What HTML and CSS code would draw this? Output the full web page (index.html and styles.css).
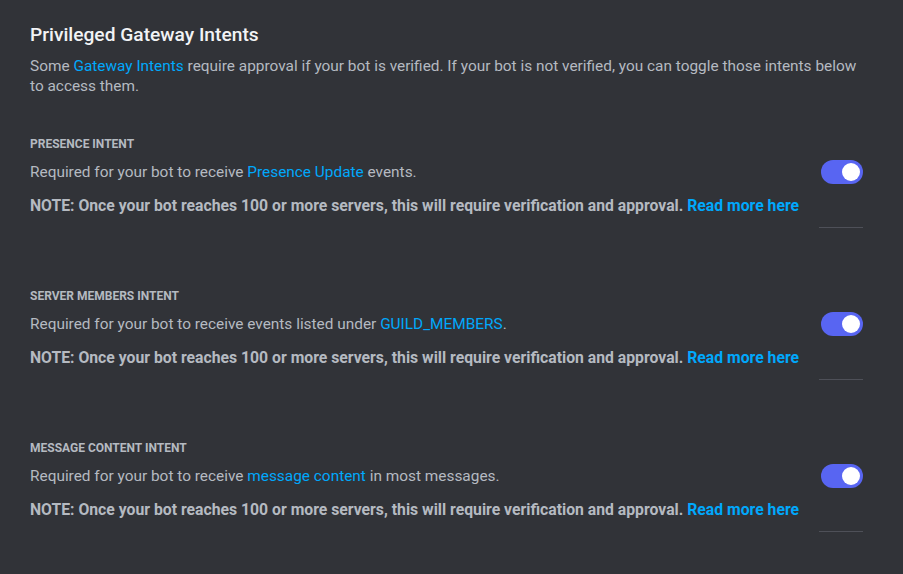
FILE: index.html
```html
<!DOCTYPE html>
<html>
<head>
<meta charset="utf-8">
<link rel="stylesheet" href="styles.css">
</head>
<body>
<div class="page">
  <h2 class="title">Privileged Gateway Intents</h2>
  <p class="desc">Some <a class="link">Gateway Intents</a> require approval if your bot is verified. If your bot is not verified, you can toggle those intents below to access them.</p>

  <section class="intent">
    <div class="text">
      <div class="label">PRESENCE INTENT</div>
      <p class="req">Required for your bot to receive <a class="link">Presence Update</a> events.</p>
      <p class="note">NOTE: Once your bot reaches 100 or more servers, this will require verification and approval. <a class="link">Read more here</a></p>
    </div>
    <div class="side">
      <div class="toggle"><span class="knob"></span></div>
      <div class="divider"></div>
    </div>
  </section>

  <section class="intent">
    <div class="text">
      <div class="label">SERVER MEMBERS INTENT</div>
      <p class="req">Required for your bot to receive events listed under <a class="link">GUILD_MEMBERS</a>.</p>
      <p class="note">NOTE: Once your bot reaches 100 or more servers, this will require verification and approval. <a class="link">Read more here</a></p>
    </div>
    <div class="side">
      <div class="toggle"><span class="knob"></span></div>
      <div class="divider"></div>
    </div>
  </section>

  <section class="intent">
    <div class="text">
      <div class="label">MESSAGE CONTENT INTENT</div>
      <p class="req">Required for your bot to receive <a class="link">message content</a> in most messages.</p>
      <p class="note">NOTE: Once your bot reaches 100 or more servers, this will require verification and approval. <a class="link">Read more here</a></p>
    </div>
    <div class="side">
      <div class="toggle"><span class="knob"></span></div>
      <div class="divider"></div>
    </div>
  </section>
</div>
</body>
</html>
```
FILE: styles.css
```css
html, body {
  margin: 0;
  padding: 0;
  background: #313338;
}
body {
  font-family: Roboto, "Noto Sans", sans-serif;
  color: #b5bac1;
  width: 903px;
  height: 574px;
  overflow: hidden;
}
.page {
  padding: 23px 40px 0 30px;
}
.title {
  margin: 0;
  font-size: 19.2px;
  line-height: 24px;
  font-weight: 500;
  color: #f2f3f5;
}
.desc {
  margin: 9px 0 0;
  font-size: 15.4px;
  line-height: 20px;
}
.link {
  color: #00a8fc;
  text-decoration: none;
}
.intent {
  display: flex;
  justify-content: space-between;
  margin-top: 40px;
}
.intent + .intent {
  margin-top: 60px;
}
.text {
  flex: 1;
}
.label {
  font-size: 12px;
  line-height: 16px;
  font-weight: 700;
  color: #b5bac1;
}
.req {
  margin: 10px 0 0;
  font-size: 15.4px;
  line-height: 20px;
}
.note {
  margin: 14px 0 0;
  font-size: 15.75px;
  line-height: 20px;
  font-weight: 700;
  white-space: nowrap;
}
.side {
  width: 44px;
  display: flex;
  flex-direction: column;
  align-items: flex-end;
  padding-top: 24px;
}
.toggle {
  width: 42px;
  height: 24px;
  border-radius: 12px;
  background: #5865f2;
  position: relative;
}
.knob {
  position: absolute;
  right: 3px;
  top: 3px;
  width: 18px;
  height: 18px;
  border-radius: 50%;
  background: #fff;
}
.divider {
  margin-top: 43px;
  width: 44px;
  height: 1px;
  background: #4e5058;
}
```
